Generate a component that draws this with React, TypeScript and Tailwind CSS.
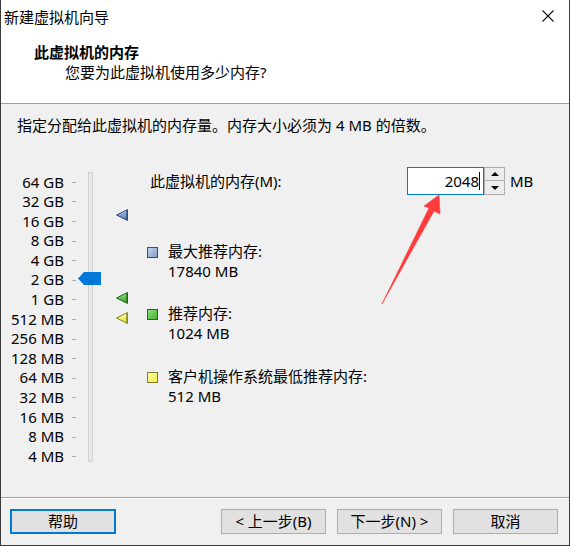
import React from 'react';

const LEVELS = [
  '64 GB', '32 GB', '16 GB', '8 GB', '4 GB', '2 GB', '1 GB',
  '512 MB', '256 MB', '128 MB', '64 MB', '32 MB', '16 MB', '8 MB', '4 MB',
];

// left-pointing marker on the slider (max / recommended / guest minimum)
function Marker({ id, light, dark, edge, top }: { id: string; light: string; dark: string; edge: string; top: string }) {
  return (
    <svg width="12" height="12" viewBox="0 0 12 12" className={`absolute left-[115px] ${top}`}>
      <defs>
        <linearGradient id={id} x1="0" y1="0" x2="0" y2="1">
          <stop offset="0" stopColor={light} />
          <stop offset="1" stopColor={dark} />
        </linearGradient>
      </defs>
      <polygon points="0.5,6 11.5,0.5 11.5,11.5" fill={`url(#${id})`} stroke={edge} strokeWidth="1" strokeLinejoin="round" />
      <line x1="11" y1="1" x2="11" y2="11" stroke={edge} strokeWidth="1.5" />
    </svg>
  );
}

function Swatch({ id, light, dark, edge }: { id: string; light: string; dark: string; edge: string }) {
  return (
    <svg width="11" height="11" viewBox="0 0 11 11" className="shrink-0 mt-[5px]">
      <defs>
        <linearGradient id={id} x1="0" y1="0" x2="1" y2="1">
          <stop offset="0" stopColor={light} />
          <stop offset="1" stopColor={dark} />
        </linearGradient>
      </defs>
      <rect x="0.5" y="0.5" width="10" height="10" fill={`url(#${id})`} stroke={edge} />
    </svg>
  );
}

function Legend({ swatch, title, value, className }: { swatch: React.ReactNode; title: string; value: string; className?: string }) {
  return (
    <div className={`flex gap-[10px] ${className ?? ''}`}>
      {swatch}
      <div className="leading-[19.5px]">
        <div>{title}</div>
        <div>{value}</div>
      </div>
    </div>
  );
}

function Button({ label, primary }: { label: string; primary?: boolean }) {
  return (
    <button
      className={`h-[25px] bg-[#e1e1e1] flex items-center justify-center leading-none ${
        primary ? 'w-[106px] border-2 border-[#0078d7]' : 'w-[105px] border border-[#adadad]'
      }`}
    >
      {label}
    </button>
  );
}

export default function App() {
  return (
    <div className="relative w-[570px] h-[546px] flex flex-col bg-[#f0f0f0] border-x border-b border-[#3a3a3a] font-['Noto_Sans','Noto_Sans_CJK_SC',sans-serif] text-[15px] text-black overflow-hidden">
      {/* title bar */}
      <div className="h-[32px] bg-white flex items-center justify-between pl-[3px] pr-[15px] shrink-0">
        <span className="leading-[20px] mt-[1px]">新建虚拟机向导</span>
        <svg width="12" height="12" viewBox="0 0 12 12">
          <path d="M0.5 0.5 L11.5 11.5 M11.5 0.5 L0.5 11.5" stroke="#111" strokeWidth="1.1" />
        </svg>
      </div>

      {/* header */}
      <div className="h-[72px] bg-white border-b border-[#a0a0a0] shrink-0 pt-[10px]">
        <div className="pl-[33px] font-bold leading-[20px]">此虚拟机的内存</div>
        <div className="pl-[64px] leading-[20px]">您要为此虚拟机使用多少内存?</div>
      </div>

      {/* body */}
      <div className="flex-1 flex flex-col">
        <div className="pl-[16px] pt-[11px] leading-[20px]">指定分配给此虚拟机的内存量。内存大小必须为 4 MB 的倍数。</div>

        <div className="relative flex items-start mt-[32px]">
          {/* scale labels */}
          <div className="w-[63px] mt-[5.5px] flex flex-col items-end">
            {LEVELS.map((l) => (
              <div key={l} className="h-[19.6px] leading-[19.6px] whitespace-nowrap">{l}</div>
            ))}
          </div>
          {/* ticks */}
          <div className="w-[4px] ml-[8px] mt-[5.5px] flex flex-col">
            {LEVELS.map((l) => (
              <div key={l} className="h-[19.6px] flex items-center">
                <div className="w-[4px] h-px bg-[#b0b0b0]" />
              </div>
            ))}
          </div>
          {/* track */}
          <div className="w-[5px] h-[290px] ml-[12px] mt-[5px] bg-[#e7e9e7] border border-[#d2d2d2]" />

          {/* thumb at 2 GB */}
          <svg width="23" height="13" viewBox="0 0 23 13" className="absolute left-[77px] top-[105px]">
            <polygon points="0,6.5 6,0 23,0 23,13 6,13" fill="#0078d7" />
          </svg>

          <Marker id="mBlue" light="#b9cdec" dark="#4a6ea8" edge="#2f4f86" top="top-[42px]" />
          <Marker id="mGreen" light="#9be88a" dark="#2f9a22" edge="#1e6e14" top="top-[125px]" />
          <Marker id="mYellow" light="#ffffa8" dark="#e0e030" edge="#8a8a2a" top="top-[145px]" />

          {/* right column */}
          <div className="ml-[54px] flex flex-col">
            <div className="h-[28px] flex items-center">
              <span className="w-[260px] pl-[3px] leading-[20px]">此虚拟机的内存(M):</span>
              <div className="w-[77px] h-[28px] bg-white border border-[#0078d7] flex items-center justify-end pr-[3px]">
                <span className="leading-[20px]">2048</span>
                <span className="w-px h-[18px] bg-black" />
              </div>
              <div className="w-[21px] h-[28px] flex flex-col">
                <div className="h-[14px] border border-[#adadad] bg-[#ececec] flex items-center justify-center">
                  <svg width="8" height="4" viewBox="0 0 8 4"><polygon points="0,4 4,0 8,4" fill="#000" /></svg>
                </div>
                <div className="h-[14px] border border-t-0 border-[#adadad] bg-[#ececec] flex items-center justify-center">
                  <svg width="8" height="4" viewBox="0 0 8 4"><polygon points="0,0 8,0 4,4" fill="#000" /></svg>
                </div>
              </div>
              <span className="ml-[5px] leading-[20px]">MB</span>
            </div>

            <Legend
              className="mt-[47px]"
              swatch={<Swatch id="sBlue" light="#c6d6f0" dark="#7d9ccc" edge="#2f4f80" />}
              title="最大推荐内存:"
              value="17840 MB"
            />
            <Legend
              className="mt-[23px]"
              swatch={<Swatch id="sGreen" light="#93e27f" dark="#3fae2c" edge="#1f6f14" />}
              title="推荐内存:"
              value="1024 MB"
            />
            <Legend
              className="mt-[24px]"
              swatch={<Swatch id="sYellow" light="#ffffb8" dark="#ecec3c" edge="#7d7d2a" />}
              title="客户机操作系统最低推荐内存:"
              value="512 MB"
            />
          </div>
        </div>
      </div>

      {/* footer */}
      <div className="h-[48px] shrink-0 border-t border-[#a0a0a0] shadow-[inset_0_1px_0_#ffffff] flex items-start pt-[11px] pl-[9px] pr-[11px]">
        <Button label="帮助" primary />
        <div className="ml-auto flex gap-[11px]">
          <Button label="< 上一步(B)" />
          <Button label="下一步(N) >" />
          <Button label="取消" />
        </div>
      </div>

      {/* red annotation arrow */}
      <svg width="570" height="546" viewBox="0 0 570 546" className="absolute left-[-1px] top-0 pointer-events-none">
        <polygon
          points="439,195 440,214 434,211 382,304 429,208 424,206"
          fill="#ff3b3b"
          stroke="#ff3b3b"
          strokeWidth="0.6"
          strokeLinejoin="round"
        />
      </svg>
    </div>
  );
}
